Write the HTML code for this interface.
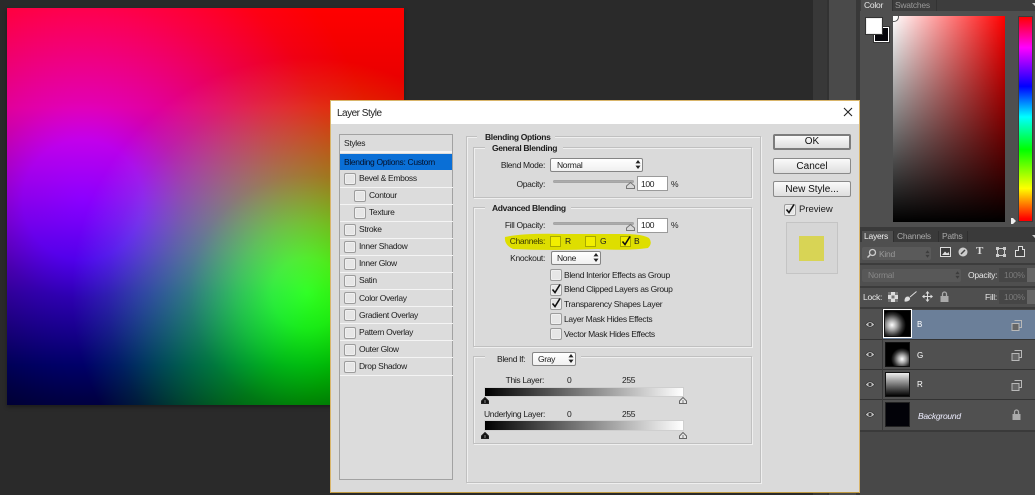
<!DOCTYPE html>
<html><head><meta charset="utf-8"><style>
html,body{margin:0;padding:0}
body{width:1035px;height:495px;overflow:hidden;position:relative;background:#2a2a2a;font-family:"Liberation Sans",sans-serif}
div,span,svg{position:absolute;box-sizing:border-box}
.t{font-size:8.5px;letter-spacing:-.33px;line-height:10px;white-space:nowrap;color:#1c1c1c}
.b{font-weight:bold}
.cb{width:12px;height:12px;border:1px solid #9c9c9c;border-radius:2px;background:#e6e6e6;box-shadow:0 0 0 1px #f0f0f0 inset}
.cy{width:11px;height:11px;border:1px solid #a8a800;background:#f2ee00}
.row{left:340px;width:113px;height:1px;background:#f4f4f4}
.fs{border:1px solid #c0c0c0;box-shadow:inset 1px 1px 0 #efefef,1px 1px 0 #efefef}
.gap{background:#dadada;height:4px}
.sel{border:1px solid #858585;border-radius:2px;background:linear-gradient(#fff,#f0f0f0)}
.inp{background:#fff;border:1px solid #9a9a9a}
.track{height:3px;background:linear-gradient(#8e8e8e,#c8c8c8);border:1px solid #a5a5a5;border-radius:2px}
.btn{left:773px;width:78px;border:1px solid #8a8a8a;border-radius:2px;background:linear-gradient(#fafafa,#dedede);text-align:center;font-size:10px;line-height:15px;color:#111;white-space:nowrap}
.l{font-size:8.5px;letter-spacing:-.25px;line-height:10px;white-space:nowrap;color:#ddd}
.sep{left:860px;width:175px;height:2px;background:#3c3c3c}
.eye{left:865px;width:10px;height:7px}
</style></head><body>
<svg width="0" height="0" style="left:0;top:0"><defs>
<symbol id="ud" viewBox="0 0 6 9"><path d="M3 0L5.500 3.400H.5zM3 9L.5 5.600h5z" fill="#222"/></symbol>
<symbol id="ck" viewBox="0 0 12 12"><path d="M2.500 6.500L5 9.500L10 1.500" fill="none" stroke="#111" stroke-width="1.600"/></symbol>
<symbol id="th" viewBox="0 0 9 7"><path d="M.5 6.500V4L4.500 .5L8.500 4V6.500Z" fill="#d8d8d8" stroke="#777"/></symbol>
<symbol id="tb" viewBox="0 0 8 7"><path d="M.5 6.500V4L4 .5L7.500 4V6.500Z" fill="#111" stroke="#222"/><path d="M4 3V6" stroke="#888"/></symbol>
<symbol id="tw" viewBox="0 0 8 7"><path d="M.5 6.500V4L4 .5L7.500 4V6.500Z" fill="#e8e8e8" stroke="#666"/><path d="M4 3V6" stroke="#777"/></symbol>
<symbol id="eye" viewBox="0 0 14 9"><path d="M.5 4.500Q7-3 13.500 4.500Q7 12 .5 4.500Z" fill="#bdbdbd" stroke="#2c2c2c" stroke-width=".8"/><circle cx="7" cy="4.500" r="2.300" fill="#3a3a3a"/></symbol>
<symbol id="lk" viewBox="0 0 11 11"><path d="M3.500 .5h7v7h-2" fill="none" stroke="#b8b8b8"/><path d="M1 3.500h7v7H1z" fill="#666" stroke="#b8b8b8"/></symbol>
<symbol id="pad" viewBox="0 0 9 11"><path d="M2.500 5V3a2 2 0 0 1 4 0V5" fill="none" stroke="#aaa" stroke-width="1.300"/><rect x=".5" y="5" width="8" height="6" fill="#aaa"/></symbol>
</defs></svg>

<!-- workspace -->
<div style="left:813px;top:0;width:14px;height:495px;background:#383838"></div>
<div style="left:827px;top:0;width:2px;height:495px;background:#323232"></div>
<div style="left:829px;top:0;width:27px;height:495px;background:#4a4a4a"></div>
<div style="left:856px;top:0;width:4px;height:495px;background:#383838"></div>

<!-- canvas -->
<div style="left:7px;top:8px;width:397px;height:397px;box-shadow:0 2px 4px rgba(0,0,0,.35);background:radial-gradient(circle 235px at 300px 285px,#00ff08 0,#00eb06 15%,#00be05 30%,#007804 50%,#004602 70%,#001e00 85%,#000 100%),radial-gradient(circle 300px at 76px 192px,#0000ff 0,#0000eb 20%,#0000af 33%,#000078 50%,#000046 66%,#000014 85%,#000 100%),linear-gradient(#ff0000 0,#e10000 25%,#8c0000 48%,#300000 72%,#000 90%);background-blend-mode:screen"></div>

<!-- right panel -->
<div style="left:860px;top:0;width:175px;height:495px;background:#4f4f4f"></div>
<div style="left:860px;top:0;width:175px;height:11px;background:#3d3d3d"></div>
<div style="left:861px;top:0;width:31px;height:11px;background:#4f4f4f"></div>
<div style="left:892px;top:0;width:1px;height:11px;background:#333"></div>
<div style="left:936px;top:0;width:1px;height:11px;background:#333"></div>
<div class="l" style="left:864px;top:0;color:#e8e8e8">Color</div>
<div class="l" style="left:895px;top:0;color:#999">Swatches</div>
<div style="left:1032px;top:3px;border:3px solid transparent;border-top-color:#ccc;border-bottom:0"></div>
<div style="left:874px;top:27px;width:15px;height:15px;background:#05050a;border:1px solid #fff;box-shadow:0 0 0 1px #333"></div>
<div style="left:866px;top:18px;width:16px;height:16px;background:#fff;border:1px solid #eee;box-shadow:0 0 0 1px #333"></div>
<div style="left:893px;top:16px;width:112px;height:206px;background:linear-gradient(transparent,#000),linear-gradient(90deg,#fff,#ff0000)"></div>
<svg style="left:893px;top:16px" width="7" height="7"><circle cx="1" cy="1" r="4.500" fill="#fff" stroke="#555"/></svg>
<div style="left:1018px;top:16px;width:15px;height:206px;background:linear-gradient(#ff0000 0,#ff00ff 15%,#0000ff 34%,#00ffff 49%,#00ff00 65%,#ffff00 84%,#ff0000 99%);border:1px solid #3c3c3c"></div>
<svg style="left:1010px;top:217px" width="7" height="8"><path d="M1 1h2l3 3-3 3H1z" fill="#eee"/></svg>

<div style="left:860px;top:227px;width:175px;height:15px;background:#3a3a3a"></div>
<div style="left:862px;top:231px;width:31px;height:11px;background:#4f4f4f"></div>
<div style="left:893px;top:231px;width:1px;height:11px;background:#2f2f2f"></div>
<div style="left:938px;top:231px;width:1px;height:11px;background:#2f2f2f"></div>
<div style="left:967px;top:231px;width:1px;height:11px;background:#2f2f2f"></div>
<div class="l" style="left:864px;top:231px;color:#eee">Layers</div>
<div class="l" style="left:897px;top:231px;color:#aaa">Channels</div>
<div class="l" style="left:942px;top:231px;color:#aaa">Paths</div>
<div style="left:1032px;top:235px;border:3px solid transparent;border-top-color:#ccc;border-bottom:0"></div>

<div style="left:862px;top:247px;width:69px;height:13px;background:#5a5a5a;border-radius:2px"></div>
<svg style="left:866px;top:248px" width="11" height="11"><circle cx="6.500" cy="4.500" r="3" fill="none" stroke="#ccc" stroke-width="1.300"/><path d="M4 7L1.500 9.500" stroke="#ccc" stroke-width="1.500"/></svg>
<div class="l" style="left:879px;top:249px;color:#999">Kind</div>
<svg style="left:925px;top:250px" width="5" height="8"><use href="#ud" width="5" height="8" style="opacity:.5"/></svg>
<svg style="left:940px;top:247px" width="11" height="10"><rect x=".5" y=".5" width="10" height="9" fill="#3c3c3c" stroke="#ddd"/><path d="M2 8L5 4.500L7 6.500L8.500 5L9.500 8z" fill="#ddd"/></svg>
<svg style="left:958px;top:247px" width="10" height="10"><circle cx="5" cy="5" r="4.500" fill="#ccc"/><path d="M3 7L7 3" stroke="#444" stroke-width="1.500"/></svg>
<div style="left:976px;top:245px;font:bold 11px/13px 'Liberation Serif',serif;color:#ddd">T</div>
<svg style="left:996px;top:247px" width="10" height="10"><rect x="1.500" y="1.500" width="7" height="7" fill="none" stroke="#ccc"/><path d="M0 0h3v3H0zM7 0h3v3H7zM0 7h3v3H0zM7 7h3v3H7z" fill="#ccc"/></svg>
<svg style="left:1015px;top:246px" width="10" height="11"><path d="M3.500 .5h4v3h2v7h-9v-6h3z" fill="#444" stroke="#ddd"/></svg>
<div class="sep" style="top:263px"></div>
<div style="left:862px;top:269px;width:99px;height:13px;background:#585858;border-radius:2px"></div>
<div class="l" style="left:868px;top:270px;color:#888">Normal</div>
<svg style="left:955px;top:271px" width="5" height="8"><use href="#ud" width="5" height="8" style="opacity:.5"/></svg>
<div style="left:999px;top:268px;width:28px;height:14px;background:#464646"></div>
<div class="l" style="left:968px;top:270px;color:#e8e8e8">Opacity:</div>
<div class="l" style="left:1004px;top:270px;color:#7a7a7a">100%</div>
<div style="left:1027px;top:268px;width:8px;height:14px;background:#666"></div>
<div class="sep" style="top:286px"></div>
<div class="l" style="left:863px;top:292px;color:#e8e8e8">Lock:</div>
<svg style="left:888px;top:292px" width="10" height="10"><rect width="10" height="10" fill="#ddd"/><path d="M0 0h3v3H0zM7 0h3v3H7zM3.500 3.500h3v3h-3zM0 7h3v3H0zM7 7h3v3H7z" fill="#777"/></svg>
<svg style="left:904px;top:291px" width="13" height="11"><path d="M12.500 .5L6 6M1 10Q1 6 4 6Q6.500 7 5 9Q3 10.500 1 10Z" fill="#ddd" stroke="#ddd"/></svg>
<svg style="left:922px;top:291px" width="11" height="11"><path d="M5.500 0L7.500 2.500H6V5H8.500V3.500L11 5.500L8.500 7.500V6H6V8.500H7.500L5.500 11L3.500 8.500H5V6H2.500V7.500L0 5.500L2.500 3.500V5H5V2.500H3.500Z" fill="#ddd"/></svg>
<svg style="left:940px;top:291px" width="9" height="11"><use href="#pad" width="9" height="11"/></svg>
<div style="left:999px;top:290px;width:28px;height:14px;background:#464646"></div>
<div class="l" style="left:985px;top:292px;color:#e8e8e8">Fill:</div>
<div class="l" style="left:1004px;top:292px;color:#7a7a7a">100%</div>
<div style="left:1027px;top:290px;width:8px;height:14px;background:#666"></div>
<div class="sep" style="top:307px"></div>

<!-- layers -->
<div style="left:860px;top:309px;width:175px;height:186px;background:#484848"></div>
<div style="left:860px;top:309px;width:22px;height:121px;background:#505050"></div>
<div style="left:883px;top:310px;width:152px;height:29px;background:#6b7f99"></div>
<div style="left:883px;top:340px;width:152px;height:29px;background:#505050"></div>
<div style="left:883px;top:370px;width:152px;height:29px;background:#505050"></div>
<div style="left:883px;top:400px;width:152px;height:30px;background:#505050"></div>
<div style="left:860px;top:339px;width:175px;height:1px;background:#333"></div>
<div style="left:860px;top:369px;width:175px;height:1px;background:#333"></div>
<div style="left:860px;top:399px;width:175px;height:1px;background:#333"></div>
<div style="left:860px;top:430px;width:175px;height:2px;background:#3a3a3a"></div>
<div style="left:882px;top:309px;width:1px;height:121px;background:#3a3a3a"></div>
<svg class="eye" style="top:321px"><use href="#eye" width="10" height="7"/></svg>
<svg class="eye" style="top:351px"><use href="#eye" width="10" height="7"/></svg>
<svg class="eye" style="top:381px"><use href="#eye" width="10" height="7"/></svg>
<svg class="eye" style="top:411px"><use href="#eye" width="10" height="7"/></svg>
<div style="left:883px;top:309px;width:29px;height:29px;border:1px solid #fff;background:radial-gradient(circle 14px at 8px 15px,#fff 0,#a8a8a8 35%,#333 75%,#000 100%);box-shadow:inset 0 0 0 1px #111"></div>
<div style="left:885px;top:342px;width:25px;height:25px;border:1px solid #111;background:radial-gradient(circle 11px at 16px 16px,#fff 0,#aaa 35%,#333 75%,#000 100%)"></div>
<div style="left:885px;top:372px;width:25px;height:25px;border:1px solid #111;background:linear-gradient(#eee,#000)"></div>
<div style="left:885px;top:402px;width:25px;height:25px;border:1px solid #222;background:#020208"></div>
<div class="l" style="left:917px;top:320px;color:#fff;font-size:8px">B</div>
<div class="l" style="left:917px;top:351px;color:#fff;font-size:8px">G</div>
<div class="l" style="left:917px;top:380px;color:#fff;font-size:8px">R</div>
<div class="l" style="left:918px;top:411px;color:#eef;font-style:italic">Background</div>
<svg style="left:1011px;top:320px" width="11" height="11"><use href="#lk" width="11" height="11"/></svg>
<svg style="left:1011px;top:350px" width="11" height="11"><use href="#lk" width="11" height="11"/></svg>
<svg style="left:1011px;top:380px" width="11" height="11"><use href="#lk" width="11" height="11"/></svg>
<svg style="left:1012px;top:409px" width="9" height="11"><use href="#pad" width="9" height="11"/></svg>

<!-- dialog -->
<div style="left:330px;top:100px;width:530px;height:393px;background:#dadada;border:1px solid #d9b56a;border-bottom:1px solid #c09a40"></div>
<div style="left:331px;top:101px;width:528px;height:23px;background:#fff"></div>
<div style="left:337px;top:107px;font-size:10px;letter-spacing:-.5px;line-height:13px;color:#222;white-space:nowrap">Layer Style</div>
<svg style="left:843px;top:107px" width="10" height="10"><path d="M1 1L9 9M9 1L1 9" stroke="#222" stroke-width="1.100"/></svg>

<!-- styles list -->
<div style="left:339px;top:134px;width:114px;height:346px;border:1px solid #a2a2a2;background:#dcdcdc"></div>
<div class="t" style="left:344px;top:138px">Styles</div>
<div style="left:340px;top:151px;width:112px;height:2px;background:#f4f4f4"></div>
<div style="left:340px;top:154px;width:112px;height:16px;background:#0a6fd6"></div>
<div class="t" style="left:344px;top:157px;color:#04112a">Blending Options: Custom</div>
<div class="row" style="top:187px"></div><div class="row" style="top:204px"></div><div class="row" style="top:221px"></div><div class="row" style="top:238px"></div><div class="row" style="top:255px"></div><div class="row" style="top:272px"></div><div class="row" style="top:289px"></div><div class="row" style="top:306px"></div><div class="row" style="top:323px"></div><div class="row" style="top:340px"></div><div class="row" style="top:357px"></div><div class="row" style="top:375px"></div>
<div class="cb" style="left:344px;top:173px"></div><div class="t" style="left:359px;top:173px">Bevel &amp; Emboss</div>
<div class="cb" style="left:354px;top:190px"></div><div class="t" style="left:369px;top:190px">Contour</div>
<div class="cb" style="left:354px;top:207px"></div><div class="t" style="left:369px;top:207px">Texture</div>
<div class="cb" style="left:344px;top:224px"></div><div class="t" style="left:359px;top:224px">Stroke</div>
<div class="cb" style="left:344px;top:241px"></div><div class="t" style="left:359px;top:241px">Inner Shadow</div>
<div class="cb" style="left:344px;top:258px"></div><div class="t" style="left:359px;top:258px">Inner Glow</div>
<div class="cb" style="left:344px;top:275px"></div><div class="t" style="left:359px;top:275px">Satin</div>
<div class="cb" style="left:344px;top:292px"></div><div class="t" style="left:359px;top:293px">Color Overlay</div>
<div class="cb" style="left:344px;top:309px"></div><div class="t" style="left:359px;top:310px">Gradient Overlay</div>
<div class="cb" style="left:344px;top:327px"></div><div class="t" style="left:359px;top:327px">Pattern Overlay</div>
<div class="cb" style="left:344px;top:344px"></div><div class="t" style="left:359px;top:344px">Outer Glow</div>
<div class="cb" style="left:344px;top:361px"></div><div class="t" style="left:359px;top:361px">Drop Shadow</div>

<!-- groups -->
<div class="fs" style="left:466px;top:136px;width:295px;height:347px"></div>
<div class="gap" style="left:477px;top:135px;width:78px"></div>
<div class="t b" style="left:485px;top:132px">Blending Options</div>
<div class="fs" style="left:473px;top:147px;width:279px;height:51px"></div>
<div class="gap" style="left:485px;top:146px;width:78px"></div>
<div class="t b" style="left:492px;top:143px">General Blending</div>
<div class="fs" style="left:473px;top:207px;width:279px;height:140px"></div>
<div class="gap" style="left:485px;top:206px;width:86px"></div>
<div class="t b" style="left:492px;top:203px">Advanced Blending</div>
<div class="fs" style="left:473px;top:356px;width:279px;height:88px"></div>
<div class="gap" style="left:485px;top:355px;width:96px"></div>

<!-- general -->
<div class="t" style="right:490px;top:160px">Blend Mode:</div>
<div class="sel" style="left:550px;top:158px;width:93px;height:14px"></div>
<div class="t" style="left:557px;top:160px">Normal</div>
<svg style="left:635px;top:160px" width="6" height="9"><use href="#ud" width="6" height="9"/></svg>
<div class="t" style="right:490px;top:179px">Opacity:</div>
<div class="track" style="left:553px;top:180px;width:81px"></div>
<svg style="left:626px;top:182px" width="9" height="7"><use href="#th" width="9" height="7"/></svg>
<div class="inp" style="left:637px;top:176px;width:31px;height:15px"></div>
<div class="t" style="left:641px;top:179px">100</div>
<div class="t" style="left:671px;top:179px">%</div>

<!-- advanced -->
<div class="t" style="right:490px;top:220px">Fill Opacity:</div>
<div class="track" style="left:553px;top:222px;width:81px"></div>
<svg style="left:626px;top:224px" width="9" height="7"><use href="#th" width="9" height="7"/></svg>
<div class="inp" style="left:637px;top:218px;width:31px;height:15px"></div>
<div class="t" style="left:641px;top:220px">100</div>
<div class="t" style="left:671px;top:220px">%</div>

<svg style="left:503px;top:232px" width="150" height="21"><path d="M2 5Q20 1 60 2L120 2Q140 2 146 6Q150 11 145 16Q125 19 95 17Q50 19 10 17Q1 13 2 5Z" fill="#dede00"/></svg>
<div class="t" style="right:490px;top:236px;color:#3a3a00">Channels:</div>
<div class="cy" style="left:550px;top:236px"></div><div class="t" style="left:565px;top:236px">R</div>
<div class="cy" style="left:585px;top:236px"></div><div class="t" style="left:600px;top:236px">G</div>
<div class="cy" style="left:620px;top:236px"></div><div class="t" style="left:634px;top:236px">B</div>
<svg style="left:620px;top:235px" width="12" height="12"><use href="#ck" width="12" height="12"/></svg>

<div class="t" style="right:490px;top:253px">Knockout:</div>
<div class="sel" style="left:551px;top:251px;width:50px;height:14px"></div>
<div class="t" style="left:557px;top:253px">None</div>
<svg style="left:593px;top:253px" width="6" height="9"><use href="#ud" width="6" height="9"/></svg>

<div class="cb" style="left:550px;top:269px"></div><div class="t" style="left:564px;top:270px">Blend Interior Effects as Group</div>
<div class="cb" style="left:550px;top:284px"></div><svg style="left:550px;top:283px" width="12" height="12"><use href="#ck" width="12" height="12"/></svg><div class="t" style="left:564px;top:284px">Blend Clipped Layers as Group</div>
<div class="cb" style="left:550px;top:298px"></div><svg style="left:550px;top:297px" width="12" height="12"><use href="#ck" width="12" height="12"/></svg><div class="t" style="left:564px;top:299px">Transparency Shapes Layer</div>
<div class="cb" style="left:550px;top:313px"></div><div class="t" style="left:564px;top:314px">Layer Mask Hides Effects</div>
<div class="cb" style="left:550px;top:328px"></div><div class="t" style="left:564px;top:329px">Vector Mask Hides Effects</div>

<!-- blend if -->
<div class="t" style="left:497px;top:354px">Blend If:</div>
<div class="sel" style="left:532px;top:352px;width:44px;height:14px"></div>
<div class="t" style="left:538px;top:354px">Gray</div>
<svg style="left:568px;top:354px" width="6" height="9"><use href="#ud" width="6" height="9"/></svg>
<div class="t" style="right:491px;top:375px">This Layer:</div>
<div class="t" style="left:567px;top:375px">0</div>
<div class="t" style="left:622px;top:375px">255</div>
<div style="left:485px;top:388px;width:198px;height:8px;background:linear-gradient(90deg,#000,#fff);box-shadow:0 0 0 1px #cfcfcf"></div>
<svg style="left:481px;top:397px" width="8" height="7"><use href="#tb" width="8" height="7"/></svg>
<svg style="left:679px;top:397px" width="8" height="7"><use href="#tw" width="8" height="7"/></svg>
<div class="t" style="left:484px;top:409px">Underlying Layer:</div>
<div class="t" style="left:567px;top:409px">0</div>
<div class="t" style="left:622px;top:409px">255</div>
<div style="left:485px;top:421px;width:198px;height:9px;background:linear-gradient(90deg,#000,#fff);box-shadow:0 0 0 1px #cfcfcf"></div>
<svg style="left:481px;top:432px" width="8" height="7"><use href="#tb" width="8" height="7"/></svg>
<svg style="left:679px;top:432px" width="8" height="7"><use href="#tw" width="8" height="7"/></svg>

<!-- buttons -->
<div class="btn" style="top:134px;height:16px;border:2px solid #7c7c7c;line-height:12px">OK</div>
<div class="btn" style="top:158px;height:16px">Cancel</div>
<div class="btn" style="top:181px;height:16px">New Style...</div>
<div class="cb" style="left:784px;top:204px"></div>
<svg style="left:784px;top:203px" width="12" height="12"><use href="#ck" width="12" height="12"/></svg>
<div class="t" style="left:799px;top:205px;font-size:9.500px;letter-spacing:0">Preview</div>
<div style="left:786px;top:222px;width:52px;height:52px;background:#d6d6d6;border:1px solid #c4c4c4"></div>
<div style="left:799px;top:236px;width:25px;height:25px;background:#d8d455"></div>
</body></html>
